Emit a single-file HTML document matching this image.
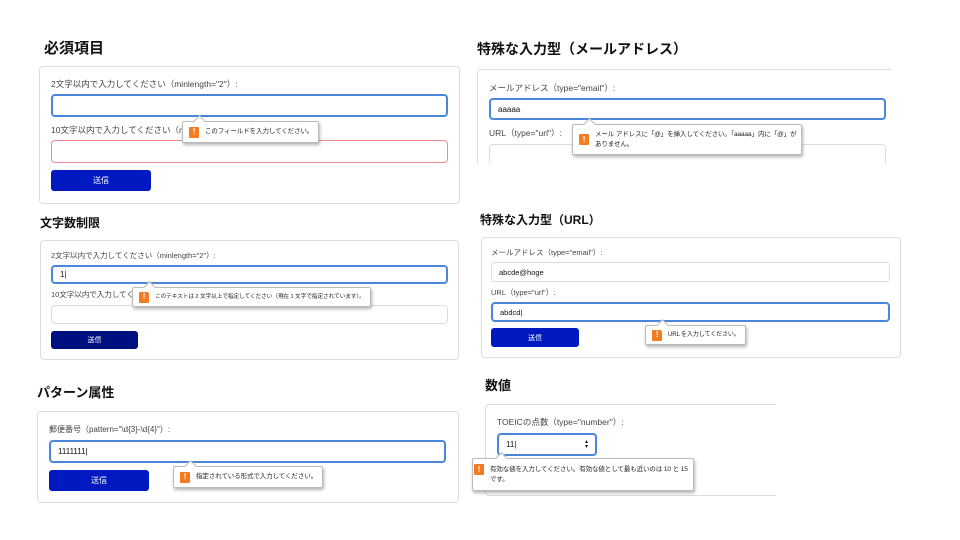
<!DOCTYPE html>
<html><head><meta charset="utf-8"><style>
*{margin:0;padding:0;box-sizing:border-box}
body{width:960px;height:540px;background:#fff;position:relative;overflow:hidden;font-family:"Liberation Sans","Noto Sans CJK JP",sans-serif;color:#333}
.a{position:absolute}
h2{position:absolute;font-weight:bold;color:#111;white-space:nowrap;line-height:1}
.box{position:absolute;border:1px solid #ddd;border-radius:4px;background:#fff}
.lbl{position:absolute;font-size:8.5px;color:#444;white-space:nowrap;line-height:1}
.in{position:absolute;border:1px solid #ddd;border-radius:4px;background:#fff;font-size:8px;color:#111;padding-left:7px;display:flex;align-items:center}
.in.f{border:2px solid #4a86dc}
.in.r{border:1px solid #f08a92}
.btn{position:absolute;background:#0019c0;color:#fff;border-radius:3px;font-size:8px;display:flex;align-items:center;justify-content:center}
.tip{position:absolute;background:#fff;border:1px solid #bbb;box-shadow:1px 2px 3px rgba(0,0,0,.3);border-radius:2px;font-size:6.5px;color:#222;display:flex;align-items:center;padding:0 5px 0 6px;line-height:1.5;white-space:nowrap;letter-spacing:-0.1px}
.tip::before{content:"";position:absolute;top:-5px;left:var(--ax,12px);width:8px;height:8px;background:#fff;border-left:1px solid #bbb;border-top:1px solid #bbb;transform:rotate(45deg)}
.ic{width:10px;height:11px;background:#f47b20;color:#fff;font-weight:bold;font-size:8px;display:inline-flex;align-items:center;justify-content:center;margin-right:6px;flex:none;border-radius:1px}
</style></head><body>

<h2 style="left:44px;top:41px;font-size:15px">必須項目</h2>
<div class="box" style="left:39px;top:66px;width:421px;height:138px"></div>
<div class="lbl" style="left:51px;top:80px">2文字以内で入力してください（minlength="2"）:</div>
<div class="in f" style="left:51px;top:94px;width:397px;height:23px"></div>
<div class="lbl" style="left:51px;top:126px">10文字以内で入力してください（maxlength="10"）:</div>
<div class="in r" style="left:51px;top:140px;width:397px;height:23px"></div>
<div class="btn" style="left:51px;top:170px;width:100px;height:21px">送信</div>
<div class="tip" style="left:182px;top:121px;height:22px"><span class="ic">!</span>このフィールドを入力してください。</div>

<h2 style="left:477px;top:42px;font-size:14px">特殊な入力型（メールアドレス）</h2>
<div class="a" style="left:477px;top:69px;width:414px;height:100px;border-top:1px solid #ddd;border-left:1px solid #ddd;border-radius:4px 0 0 0"></div>
<div class="lbl" style="left:489px;top:84px">メールアドレス（type="email"）:</div>
<div class="in f" style="left:489px;top:98px;width:397px;height:22px">aaaaa</div>
<div class="lbl" style="left:489px;top:129px">URL（type="url"）:</div>
<div class="a" style="left:489px;top:144px;width:397px;height:30px;border:1px solid #ddd;border-radius:4px"></div>
<div class="a" style="left:470px;top:163px;width:440px;height:30px;background:#fff"></div>
<div class="tip" style="left:572px;top:124px;height:31px"><span class="ic">!</span><span>メール アドレスに「@」を挿入してください。「aaaaa」内に「@」が<br>ありません。</span></div>

<h2 style="left:40px;top:217px;font-size:12px">文字数制限</h2>
<div class="box" style="left:40px;top:240px;width:419px;height:120px"></div>
<div class="lbl" style="left:51px;top:252px;font-size:7.5px">2文字以内で入力してください（minlength="2"）:</div>
<div class="in f" style="left:51px;top:265px;width:397px;height:19px">1|</div>
<div class="lbl" style="left:51px;top:291px;font-size:7.5px">10文字以内で入力してください</div>
<div class="in" style="left:51px;top:305px;width:397px;height:19px"></div>
<div class="btn" style="left:51px;top:331px;width:87px;height:18px;background:#000f80;font-size:7px">送信</div>
<div class="tip" style="left:132px;top:287px;height:20px;font-size:5.7px"><span class="ic">!</span>このテキストは 2 文字以上で指定してください（現在 1 文字で指定されています）。</div>

<h2 style="left:480px;top:214px;font-size:12px">特殊な入力型（URL）</h2>
<div class="box" style="left:481px;top:237px;width:420px;height:121px"></div>
<div class="lbl" style="left:491px;top:249px;font-size:7.5px">メールアドレス（type="email"）:</div>
<div class="in" style="left:491px;top:262px;width:399px;height:20px;font-size:7.5px">abcde@hoge</div>
<div class="lbl" style="left:491px;top:289px;font-size:7.5px">URL（type="url"）:</div>
<div class="in f" style="left:491px;top:302px;width:399px;height:20px;font-size:7.5px">abdcd|</div>
<div class="btn" style="left:491px;top:328px;width:88px;height:19px;font-size:7px">送信</div>
<div class="tip" style="left:645px;top:325px;height:20px;font-size:6px"><span class="ic">!</span>URL を入力してください。</div>

<h2 style="left:37px;top:386px;font-size:13px">パターン属性</h2>
<div class="box" style="left:37px;top:411px;width:422px;height:92px"></div>
<div class="lbl" style="left:49px;top:426px;font-size:8px">郵便番号（pattern="\d{3}-\d{4}"）:</div>
<div class="in f" style="left:49px;top:440px;width:397px;height:23px">1111111|</div>
<div class="btn" style="left:49px;top:470px;width:100px;height:21px">送信</div>
<div class="tip" style="left:173px;top:466px;height:22px"><span class="ic">!</span>指定されている形式で入力してください。</div>

<h2 style="left:485px;top:379px;font-size:13px">数値</h2>
<div class="a" style="left:485px;top:404px;width:291px;height:92px;border-top:1px solid #ddd;border-left:1px solid #ddd;border-bottom:1px solid #ddd;border-radius:4px 0 0 4px"></div>
<div class="lbl" style="left:497px;top:418px">TOEICの点数（type="number"）:</div>
<div class="in f" style="left:497px;top:433px;width:100px;height:23px">11|<span style="position:absolute;right:7px;font-size:6px;line-height:5px">▴<br>▾</span></div>
<div class="tip" style="left:472px;top:458px;height:33px;--ax:24px;padding-left:1px"><span class="ic" style="align-self:flex-start;margin-top:5px">!</span><span>有効な値を入力してください。有効な値として最も近いのは 10 と 15<br>です。</span></div>

</body></html>
